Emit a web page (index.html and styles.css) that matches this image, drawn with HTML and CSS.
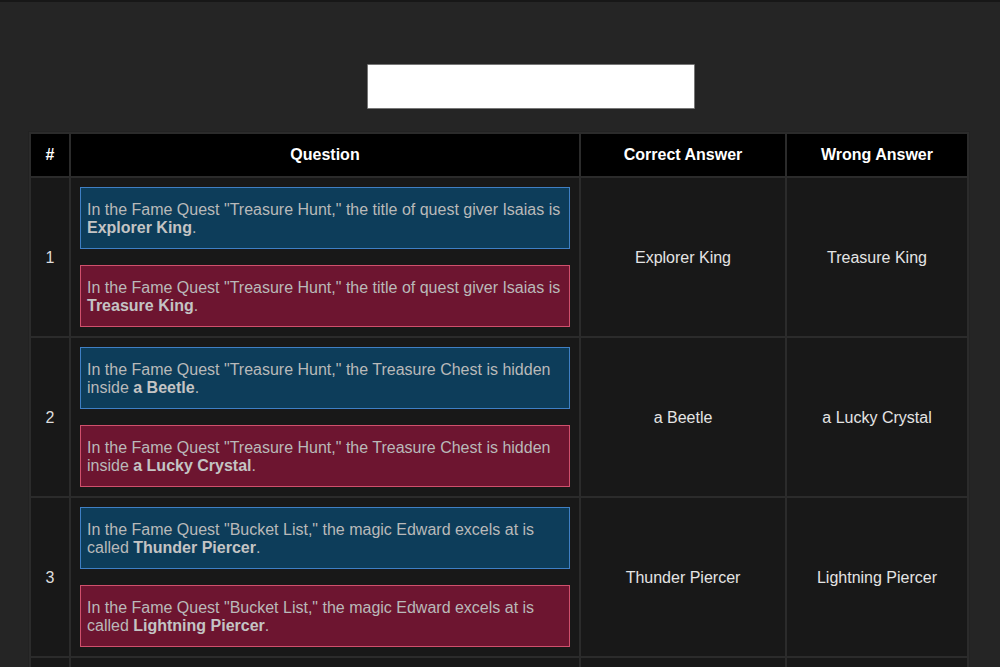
FILE: index.html
```html
<!DOCTYPE html>
<html lang="en">
<head>
<meta charset="utf-8">
<title>Fame Quest Quiz</title>
<link rel="stylesheet" href="styles.css">
</head>
<body>
<div class="topbar"></div>
<div class="search-row"><input class="search" type="text"></div>
<table class="quiz">
  <thead>
    <tr>
      <th class="col-num">#</th>
      <th class="col-q">Question</th>
      <th class="col-c">Correct Answer</th>
      <th class="col-w">Wrong Answer</th>
    </tr>
  </thead>
  <tbody>
    <tr>
      <td class="num">1</td>
      <td class="q">
        <div class="stmt right">In the Fame Quest "Treasure Hunt," the title of quest giver Isaias is <b>Explorer King</b>.</div>
        <div class="stmt wrong">In the Fame Quest "Treasure Hunt," the title of quest giver Isaias is <b>Treasure King</b>.</div>
      </td>
      <td class="ans">Explorer King</td>
      <td class="ans">Treasure King</td>
    </tr>
    <tr>
      <td class="num">2</td>
      <td class="q">
        <div class="stmt right">In the Fame Quest "Treasure Hunt," the Treasure Chest is hidden inside <b>a Beetle</b>.</div>
        <div class="stmt wrong">In the Fame Quest "Treasure Hunt," the Treasure Chest is hidden inside <b>a Lucky Crystal</b>.</div>
      </td>
      <td class="ans">a Beetle</td>
      <td class="ans">a Lucky Crystal</td>
    </tr>
    <tr>
      <td class="num">3</td>
      <td class="q">
        <div class="stmt right">In the Fame Quest "Bucket List," the magic Edward excels at is called <b>Thunder Piercer</b>.</div>
        <div class="stmt wrong">In the Fame Quest "Bucket List," the magic Edward excels at is called <b>Lightning Piercer</b>.</div>
      </td>
      <td class="ans">Thunder Piercer</td>
      <td class="ans">Lightning Piercer</td>
    </tr>
    <tr>
      <td class="num">4</td>
      <td class="q">
        <div class="stmt right">In the Fame Quest "Bucket List," the quest giver is <b>Edward</b>.</div>
        <div class="stmt wrong">In the Fame Quest "Bucket List," the quest giver is <b>Isaias</b>.</div>
      </td>
      <td class="ans">Edward</td>
      <td class="ans">Isaias</td>
    </tr>
  </tbody>
</table>
</body>
</html>
```

FILE: styles.css
```css
html, body {
  margin: 0;
  padding: 0;
  background: #252525;
  font-family: "Liberation Sans", Arial, sans-serif;
  font-size: 16px;
  color: #e0e0e0;
}

.topbar {
  height: 2px;
  background: #171717;
}

.search-row {
  padding-top: 62px;
}

.search {
  display: block;
  box-sizing: border-box;
  margin: 0 0 0 367px;
  width: 328px;
  height: 45px;
  border: 1px solid #767676;
  border-radius: 1px;
  background: #ffffff;
  padding: 0 8px;
  font-family: inherit;
  font-size: 16px;
}

.quiz {
  margin: 22px 0 0 28px;
  width: 942px;
  table-layout: fixed;
  border-collapse: separate;
  border-spacing: 2px;
  border: 1px solid #222222;
  background: #2b2b2b;
}

.quiz th {
  background: #000000;
  color: #ffffff;
  font-weight: bold;
  height: 42px;
  padding: 0;
  text-align: center;
  vertical-align: middle;
  line-height: 18px;
}

.col-num { width: 38px; }
.col-q { width: 508px; }
.col-c { width: 204px; }
.col-w { width: 180px; }

.quiz td {
  background: #181818;
  text-align: center;
  vertical-align: middle;
  padding: 0;
  line-height: 18px;
}

.quiz td.num {
  color: #dddddd;
  padding-top: 1px;
}

.quiz td.ans {
  color: #e4e4e4;
  padding-top: 1px;
}

.quiz td.q {
  padding: 9px;
  text-align: left;
}

.stmt {
  box-sizing: border-box;
  height: 62px;
  padding: 13px 6px 11px;
  border: 1px solid;
  color: #b9b9b9;
  line-height: 18px;
}

.stmt + .stmt {
  margin-top: 16px;
}

.stmt b {
  color: #c4c4c4;
}

.stmt.right {
  background: #0d3d5a;
  border-color: #3f7fc4;
}

.stmt.wrong {
  background: #6d1530;
  border-color: #d0506c;
}
```
